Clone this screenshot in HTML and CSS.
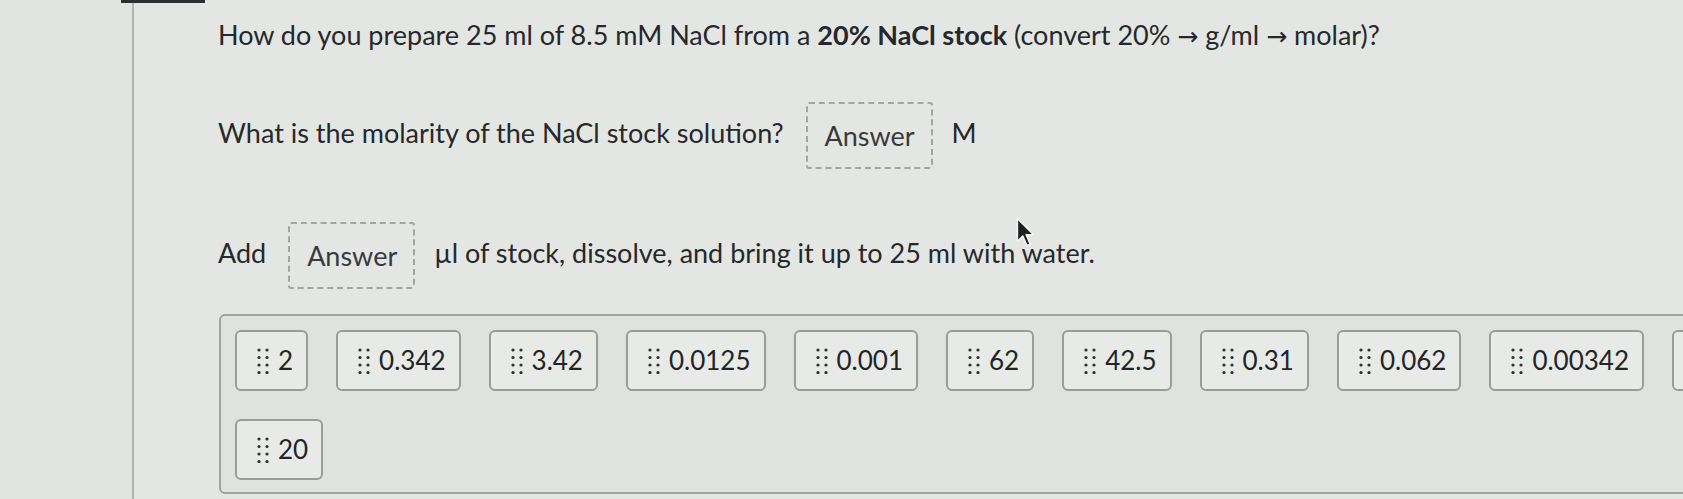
FILE: index.html
```html
<!DOCTYPE html>
<html lang="en">
<head>
<meta charset="utf-8">
<title>Question</title>
<link rel="stylesheet" href="styles.css">
</head>
<body>
<div class="page">
  <aside class="sidebar"></aside>
  <main class="content">
    <p class="question">How do you prepare 25 ml of 8.5 mM NaCl from a <strong>20% NaCl stock</strong> (convert 20% <span class="arrow">→</span> g/ml <span class="arrow">→</span> molar)?</p>
    <p class="line line-two">What is the molarity of the NaCl stock solution? <span class="blank">Answer</span> M</p>
    <p class="line line-three">Add <span class="blank">Answer</span> µl of stock, dissolve, and bring it up to 25 ml with water.</p>
    <div class="bank">
      <div class="chip"><svg class="handle" viewBox="0 0 12 26"><circle cx="2" cy="2" r="1.6"/><circle cx="10" cy="2" r="1.6"/><circle cx="2" cy="9.5" r="1.6"/><circle cx="10" cy="9.5" r="1.6"/><circle cx="2" cy="17" r="1.6"/><circle cx="10" cy="17" r="1.6"/><circle cx="2" cy="24.5" r="1.6"/><circle cx="10" cy="24.5" r="1.6"/></svg><span>2</span></div>
      <div class="chip"><svg class="handle" viewBox="0 0 12 26"><circle cx="2" cy="2" r="1.6"/><circle cx="10" cy="2" r="1.6"/><circle cx="2" cy="9.5" r="1.6"/><circle cx="10" cy="9.5" r="1.6"/><circle cx="2" cy="17" r="1.6"/><circle cx="10" cy="17" r="1.6"/><circle cx="2" cy="24.5" r="1.6"/><circle cx="10" cy="24.5" r="1.6"/></svg><span>0.342</span></div>
      <div class="chip"><svg class="handle" viewBox="0 0 12 26"><circle cx="2" cy="2" r="1.6"/><circle cx="10" cy="2" r="1.6"/><circle cx="2" cy="9.5" r="1.6"/><circle cx="10" cy="9.5" r="1.6"/><circle cx="2" cy="17" r="1.6"/><circle cx="10" cy="17" r="1.6"/><circle cx="2" cy="24.5" r="1.6"/><circle cx="10" cy="24.5" r="1.6"/></svg><span>3.42</span></div>
      <div class="chip"><svg class="handle" viewBox="0 0 12 26"><circle cx="2" cy="2" r="1.6"/><circle cx="10" cy="2" r="1.6"/><circle cx="2" cy="9.5" r="1.6"/><circle cx="10" cy="9.5" r="1.6"/><circle cx="2" cy="17" r="1.6"/><circle cx="10" cy="17" r="1.6"/><circle cx="2" cy="24.5" r="1.6"/><circle cx="10" cy="24.5" r="1.6"/></svg><span>0.0125</span></div>
      <div class="chip"><svg class="handle" viewBox="0 0 12 26"><circle cx="2" cy="2" r="1.6"/><circle cx="10" cy="2" r="1.6"/><circle cx="2" cy="9.5" r="1.6"/><circle cx="10" cy="9.5" r="1.6"/><circle cx="2" cy="17" r="1.6"/><circle cx="10" cy="17" r="1.6"/><circle cx="2" cy="24.5" r="1.6"/><circle cx="10" cy="24.5" r="1.6"/></svg><span>0.001</span></div>
      <div class="chip"><svg class="handle" viewBox="0 0 12 26"><circle cx="2" cy="2" r="1.6"/><circle cx="10" cy="2" r="1.6"/><circle cx="2" cy="9.5" r="1.6"/><circle cx="10" cy="9.5" r="1.6"/><circle cx="2" cy="17" r="1.6"/><circle cx="10" cy="17" r="1.6"/><circle cx="2" cy="24.5" r="1.6"/><circle cx="10" cy="24.5" r="1.6"/></svg><span>62</span></div>
      <div class="chip"><svg class="handle" viewBox="0 0 12 26"><circle cx="2" cy="2" r="1.6"/><circle cx="10" cy="2" r="1.6"/><circle cx="2" cy="9.5" r="1.6"/><circle cx="10" cy="9.5" r="1.6"/><circle cx="2" cy="17" r="1.6"/><circle cx="10" cy="17" r="1.6"/><circle cx="2" cy="24.5" r="1.6"/><circle cx="10" cy="24.5" r="1.6"/></svg><span>42.5</span></div>
      <div class="chip"><svg class="handle" viewBox="0 0 12 26"><circle cx="2" cy="2" r="1.6"/><circle cx="10" cy="2" r="1.6"/><circle cx="2" cy="9.5" r="1.6"/><circle cx="10" cy="9.5" r="1.6"/><circle cx="2" cy="17" r="1.6"/><circle cx="10" cy="17" r="1.6"/><circle cx="2" cy="24.5" r="1.6"/><circle cx="10" cy="24.5" r="1.6"/></svg><span>0.31</span></div>
      <div class="chip"><svg class="handle" viewBox="0 0 12 26"><circle cx="2" cy="2" r="1.6"/><circle cx="10" cy="2" r="1.6"/><circle cx="2" cy="9.5" r="1.6"/><circle cx="10" cy="9.5" r="1.6"/><circle cx="2" cy="17" r="1.6"/><circle cx="10" cy="17" r="1.6"/><circle cx="2" cy="24.5" r="1.6"/><circle cx="10" cy="24.5" r="1.6"/></svg><span>0.062</span></div>
      <div class="chip"><svg class="handle" viewBox="0 0 12 26"><circle cx="2" cy="2" r="1.6"/><circle cx="10" cy="2" r="1.6"/><circle cx="2" cy="9.5" r="1.6"/><circle cx="10" cy="9.5" r="1.6"/><circle cx="2" cy="17" r="1.6"/><circle cx="10" cy="17" r="1.6"/><circle cx="2" cy="24.5" r="1.6"/><circle cx="10" cy="24.5" r="1.6"/></svg><span>0.00342</span></div>
      <div class="chip"><svg class="handle" viewBox="0 0 12 26"><circle cx="2" cy="2" r="1.6"/><circle cx="10" cy="2" r="1.6"/><circle cx="2" cy="9.5" r="1.6"/><circle cx="10" cy="9.5" r="1.6"/><circle cx="2" cy="17" r="1.6"/><circle cx="10" cy="17" r="1.6"/><circle cx="2" cy="24.5" r="1.6"/><circle cx="10" cy="24.5" r="1.6"/></svg></div>
      <div class="chip"><svg class="handle" viewBox="0 0 12 26"><circle cx="2" cy="2" r="1.6"/><circle cx="10" cy="2" r="1.6"/><circle cx="2" cy="9.5" r="1.6"/><circle cx="10" cy="9.5" r="1.6"/><circle cx="2" cy="17" r="1.6"/><circle cx="10" cy="17" r="1.6"/><circle cx="2" cy="24.5" r="1.6"/><circle cx="10" cy="24.5" r="1.6"/></svg><span>20</span></div>
    </div>
  </main>
  <div class="topbar"></div>
  <svg class="cursor" viewBox="0 0 14 22"><path d="M1 1 L1 18 L5 14 L8 21 L10.5 20 L7.5 13 L13 13 Z" fill="#1e2022" stroke="#f4f4f2" stroke-width="1.2" stroke-linejoin="round"/></svg>
</div>
</body>
</html>
```

FILE: styles.css
```css
* { box-sizing: border-box; }
html, body {
  margin: 0;
  padding: 0;
  height: 100%;
  overflow: hidden;
  background: #e4e6e3;
}
body {
  font-family: Lato, "Liberation Sans", sans-serif;
  color: #26282b;
}
.page {
  position: relative;
  display: flex;
  width: 100%;
  height: 100%;
}
.sidebar {
  flex: 0 0 134px;
  height: 100%;
  border-right: 2px solid #b3b5b3;
  background: #e2e4e1;
}
.content {
  flex: 1 1 auto;
  min-width: 0;
  padding: 18px 0 0 84px;
}
.question {
  margin: 0;
  font-size: 27px;
  line-height: 34px;
  white-space: nowrap;
}
.question strong { font-weight: 700; }
.arrow {
  font-family: "DejaVu Sans", sans-serif;
  font-size: 25px;
  line-height: 1;
}
.line {
  margin: 0;
  font-size: 27px;
  line-height: 34px;
  white-space: nowrap;
}
.line-two { margin-top: 50px; }
.line-three { margin-top: 53px; }
.blank {
  display: inline-block;
  vertical-align: -3px;
  margin: 0 12px 0 15px;
  padding: 15px 16px 14px 17px;
  border: 2px dashed #a3a5a4;
  border-radius: 3px;
  color: #383b3e;
}
.bank {
  display: flex;
  flex-wrap: wrap;
  gap: 28px 28px;
  width: 1575px;
  margin: 25px 0 0 1px;
  padding: 14px 14px 12px 14px;
  border: 2px solid #a0a3a1;
  border-radius: 6px;
  background: #e0e2df;
}
.chip {
  display: flex;
  align-items: center;
  gap: 9px;
  padding: 13px 13px 13px 20px;
  border: 2px solid #999c9a;
  border-radius: 6px;
  background: #e8eae7;
  font-size: 26px;
  line-height: 31px;
  color: #222427;
}
.handle {
  width: 12px;
  height: 26px;
  fill: #2e3033;
  flex: 0 0 auto;
}
.topbar {
  position: absolute;
  left: 121px;
  top: 0;
  width: 84px;
  height: 3px;
  background: #2b2e33;
}
.cursor {
  position: absolute;
  left: 1016px;
  top: 217px;
  width: 19px;
  height: 30px;
}
```
